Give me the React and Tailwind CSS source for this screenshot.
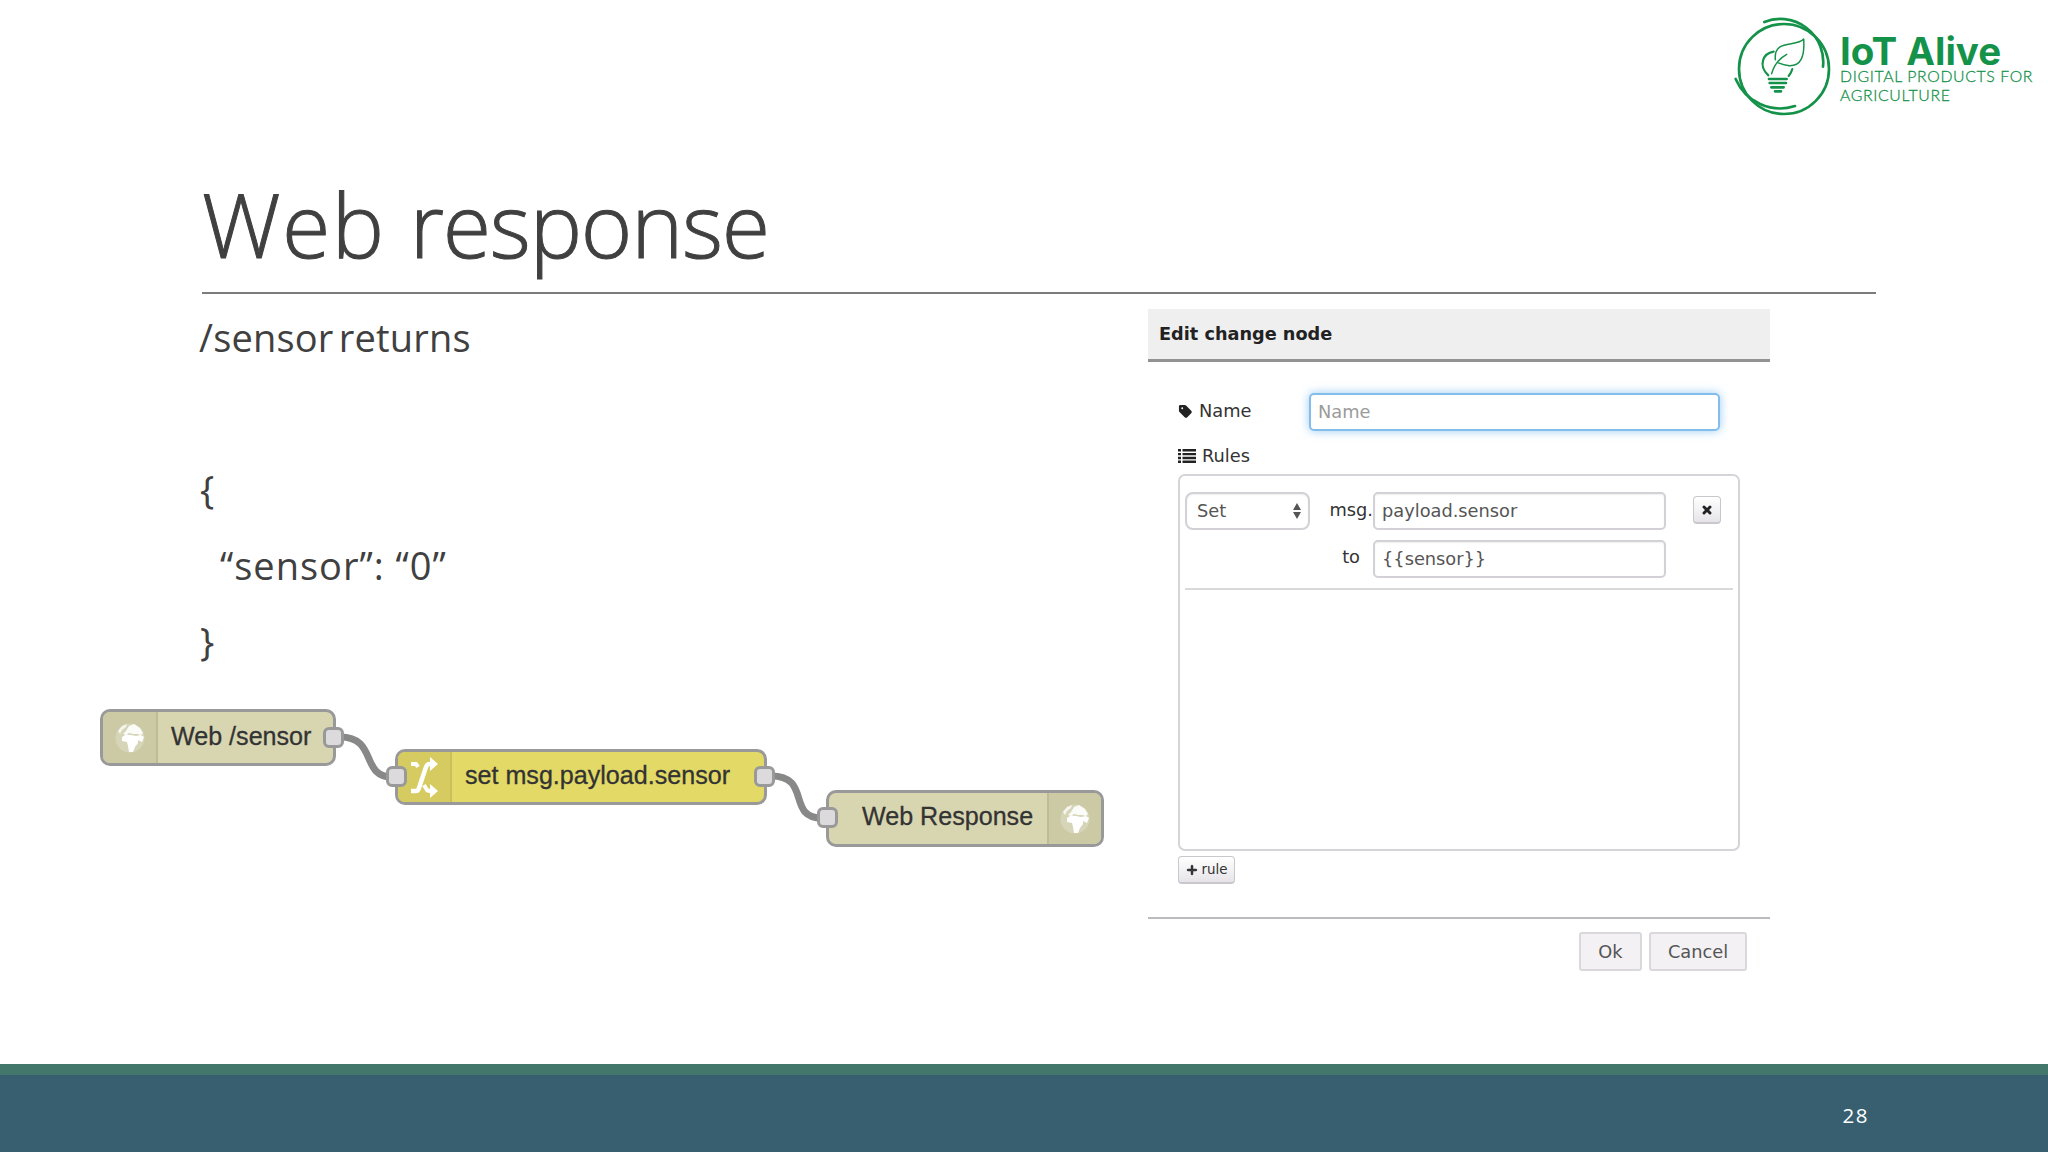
import React from "react";
import { FaTag, FaPlus, FaXmark } from "react-icons/fa6";

const CODE_LINES = [
  { text: "/sensor returns", className: "-ml-px tracking-[0.2px] [word-spacing:-5px]" },
  { text: "", className: "" },
  { text: "{", className: "" },
  { text: "“sensor”: “0”", className: "pl-[20px] tracking-[1px]" },
  { text: "}", className: "" },
];

const LogoMark = () => (
  <svg
    className="w-[106px] h-[110px]"
    viewBox="0 0 318 330"
    fill="none"
    stroke="#15924a"
    strokeLinecap="round"
  >
    <g strokeWidth="8">
      <circle cx="162" cy="177" r="135" />
      <path d="M103 36 A129 129 0 0 1 279 170" />
      <path d="M17 207 A145 145 0 0 0 195 288" />
      <path d="M117 207 H170 M119 219 H168 M124 232 H161 M135 244 H153" />
    </g>
    <g strokeWidth="6.5">
      <path d="M131 125 C98 130 84 168 115 196" />
      <path d="M187 177 Q184 188 176 198" />
    </g>
    <g strokeWidth="4.5" strokeLinejoin="round">
      <path d="M136 149 C130 85 200 113 221 87 C225 142 211 168 178 167 C163 166 153 162 143 158" />
      <path d="M125 191 C131 168 147 146 170 133" />
    </g>
  </svg>
);

const Globe = () => (
  <svg className="w-[32px] h-[32px]" viewBox="0 0 32 32" fill="#fff">
    <circle cx="16" cy="16" r="14.5" opacity="0.22" />
    <path opacity="0.75" d="M4 9 L8 4 L13 2 L12 5 L8 8 L6 12 Z" />
    <path opacity="0.9" d="M12 9 L15 4 L20 2 L26 6 L29 11 L27 13 L23 12 L19 12 L15 11 L12 13 L9 12 Z" />
    <path d="M8 15 L12 12.5 L17 13 L22 14 L27 13 L30 15 L28 20 L24 18 L24 21 L21 25 L19 30 L15 30 L14 24 L13 20 L8 19 Z" />
  </svg>
);

const Swap = () => (
  <svg className="w-[28px] h-[42px]" viewBox="0 0 28 42">
    <g fill="none" stroke="#fff" strokeWidth="4">
      <path d="M1 8 H6 L8 11" />
      <path d="M14 29 L17 34 Q18 35 22 35" />
      <path d="M1 35 H6 Q8 35 9 32 L16 11 Q17 8 20 8 H22" strokeWidth="4.5" />
    </g>
    <path d="M20 1 L28 8 L20 15 Z M20 28 L28 35 L20 42 Z" fill="#fff" />
  </svg>
);

const ListIcon = () => (
  <svg className="h-[14px] w-[18px]" viewBox="0 0 18 14" fill="#222">
    <path d="M0 0h3v2.4H0z M0 3.9h3v2.4H0z M0 7.8h3v2.4H0z M0 11.6h3V14H0z" />
    <path d="M4.5 0H18v2.4H4.5z M4.5 3.9H18v2.4H4.5z M4.5 7.8H18v2.4H4.5z M4.5 11.6H18V14H4.5z" />
  </svg>
);

const Port = ({ className }) => (
  <div
    className={`absolute w-[21px] h-[21px] rounded-[6px] border-[3px] border-[#999] bg-[#dcdadc] ${className}`}
  />
);

const Flow = () => (
  <div className="relative mt-[21px] h-[160px] font-['Liberation_Sans',sans-serif] text-[25.1px] text-[#333] [-webkit-text-stroke:0.3px_#333]">
    <svg
      className="absolute left-0 top-0 w-[1148px] h-[160px]"
      fill="none"
      stroke="#888"
      strokeWidth="7"
    >
      <path d="M340 37 C378 37 360 77 392 77" />
      <path d="M771 76 C812 76 786 118 822 118" />
    </svg>

    <div className="absolute left-[100px] top-[9px] flex h-[57px] w-[236px] items-center overflow-hidden rounded-[10px] border-[3px] border-[#999] bg-[#d8d6b1]">
      <div className="flex h-full w-[55px] items-center justify-center border-r-2 border-[#bdbb98] bg-[#cbcaa5]">
        <Globe />
      </div>
      <span className="pb-[2px] pl-[13px] whitespace-nowrap">Web /sensor</span>
    </div>

    <div className="absolute left-[395px] top-[49px] flex h-[56px] w-[372px] items-center overflow-hidden rounded-[10px] border-[3px] border-[#999] bg-[#e2d966]">
      <div className="flex h-full w-[54px] items-center border-r-2 border-[#c9c05a] bg-[#d5cb60] pl-[12px]">
        <Swap />
      </div>
      <span className="pb-[2px] pl-[13px] whitespace-nowrap">set msg.payload.sensor</span>
    </div>

    <div className="absolute left-[826px] top-[90px] flex h-[57px] w-[278px] items-center justify-between overflow-hidden rounded-[10px] border-[3px] border-[#999] bg-[#d8d6b1]">
      <span className="pb-[3px] pl-[33px] whitespace-nowrap">Web Response</span>
      <div className="flex h-full w-[54px] items-center justify-center border-l-2 border-[#bdbb98] bg-[#cbcaa5]">
        <Globe />
      </div>
    </div>

    <Port className="left-[323px] top-[27px]" />
    <Port className="left-[386px] top-[66px]" />
    <Port className="left-[754px] top-[66px]" />
    <Port className="left-[817px] top-[107px]" />
  </div>
);

const Field = ({ children, className }) => (
  <div
    className={`flex items-center rounded-[5px] border-2 border-[#d3d0d6] bg-white text-[#555] shadow-[inset_0_1px_2px_rgba(0,0,0,0.06)] ${className}`}
  >
    {children}
  </div>
);

const EditPanel = () => (
  <section className="mt-[15px] flex w-[622px] flex-col font-['DejaVu_Sans',sans-serif] text-[17.8px] text-[#333]">
    <div className="flex h-[53px] items-center border-b-[3px] border-[#929292] bg-[#efefef] pl-[11px] text-[17.7px] font-bold text-[#222]">
      Edit change node
    </div>

    <div className="mt-[21px] flex h-[58px] items-center pl-[30px]">
      <div className="flex w-[131px] items-center gap-[6px] pb-[2px]">
        <FaTag className="h-[15px] w-[15px] text-[#222]" />
        <span>Name</span>
      </div>
      <div className="flex h-[38px] w-[411px] items-center rounded-[5px] border-2 border-[#84bdea] bg-white pl-[7px] text-[#9b9b9b] shadow-[0_0_10px_rgba(82,168,236,0.6)]">
        Name
      </div>
    </div>

    <div className="flex h-[30px] items-center gap-[6px] pl-[30px]">
      <ListIcon />
      <span>Rules</span>
    </div>

    <div className="mt-[3px] ml-[30px] h-[377px] w-[562px] rounded-[7px] border-2 border-[#d6d4d9] px-[5px]">
      <div className="flex h-[114px] border-b-2 border-[#d9d9d9] pt-[16px]">
        <Field className="h-[38px] w-[125px] justify-between rounded-[8px] pr-[7px] pl-[10px]">
          Set
          <svg className="h-[16px] w-[8px]" viewBox="0 0 8 16" fill="#555">
            <path d="M4 0 L8 7 H0 Z M4 16 L8 9 H0 Z" />
          </svg>
        </Field>
        <div className="flex w-[63px] flex-col items-end">
          <span className="flex h-[36px] items-center">msg.</span>
          <span className="mt-[11px] flex h-[37px] items-center pr-[13px]">to</span>
        </div>
        <div className="flex flex-col gap-[10px]">
          <Field className="h-[38px] w-[293px] pl-[7px]">payload.sensor</Field>
          <Field className="h-[38px] w-[293px] pl-[7px]">{"{{sensor}}"}</Field>
        </div>
        <button className="mt-[4px] ml-[27px] flex h-[28px] w-[28px] items-center justify-center rounded-[4px] border border-b-2 border-[#c9c7cc] bg-gradient-to-b from-white to-[#e6e4e8] text-[#222]">
          <FaXmark className="h-[12px] w-[12px] stroke-[#222] stroke-[60]" />
        </button>
      </div>
    </div>

    <button className="mt-[5px] ml-[30px] flex h-[28px] w-[57px] items-center justify-center gap-[4px] rounded-[4px] border border-b-2 border-[#c9c7cc] bg-gradient-to-b from-white to-[#e6e4e8] pt-px text-[13.4px]">
      <FaPlus className="h-[12px] w-[12px] stroke-[#222] stroke-[40]" />
      rule
    </button>

    <div className="mt-[33px] flex justify-end gap-[7px] border-t-2 border-[#bcb9bf] pt-[13px] pr-[23px] text-[#555]">
      <button className="h-[39px] w-[63px] rounded-[3px] border-2 border-[#dad8dd] bg-[#f3f1f4] pt-px">
        Ok
      </button>
      <button className="h-[39px] w-[98px] rounded-[3px] border-2 border-[#dad8dd] bg-[#f3f1f4] pt-px">
        Cancel
      </button>
    </div>
  </section>
);

const App = () => {
  return (
    <div className="flex h-[1152px] w-[2048px] flex-col overflow-hidden bg-white font-['Open_Sans',sans-serif] text-[#404040]">
      <header className="flex h-[130px] justify-end pt-[10px] pr-[12px] text-[#15924a]">
        <LogoMark />
        <div className="w-[200px] pt-[26px] pl-[4px]">
          <div className="font-['Inter',sans-serif] text-[38.5px] leading-[31px] font-bold whitespace-nowrap">
            IoT Alive
          </div>
          <div className="-mt-px font-['Lato',sans-serif] text-[15.8px] leading-[19px] font-light tracking-[0.65px] whitespace-nowrap text-[#15924a] [-webkit-text-stroke:0.3px_#15924a]">
            DIGITAL PRODUCTS FOR
            <br />
            AGRICULTURE
          </div>
        </div>
      </header>

      <div className="ml-[202px] flex h-[164px] w-[1674px] items-center border-b-2 border-[#7c7c7c] pt-[25px]">
        <h1 className="text-[88px] leading-none font-light tracking-[-1.2px] [-webkit-text-stroke:1px_#404040]">
          <span className="tracking-[1.4px]">Web </span>
          response
        </h1>
      </div>

      <main className="flex h-[770px]">
        <div className="w-[1148px] pt-[5px]">
          <div className="pl-[200px] text-[38px] leading-[76px]">
            {CODE_LINES.map(({ text, className }, i) => (
              <p key={i} className={`h-[76px] ${className}`}>
                {text}
              </p>
            ))}
          </div>
          <Flow />
        </div>
        <EditPanel />
      </main>

      <footer className="flex h-[88px] justify-end border-t-[11px] border-[#44776c] bg-[#375f70] pt-[26px] pr-[179px] text-[20.5px] leading-[28px] tracking-[1.5px] text-white">
        28
      </footer>
    </div>
  );
};

export default App;
